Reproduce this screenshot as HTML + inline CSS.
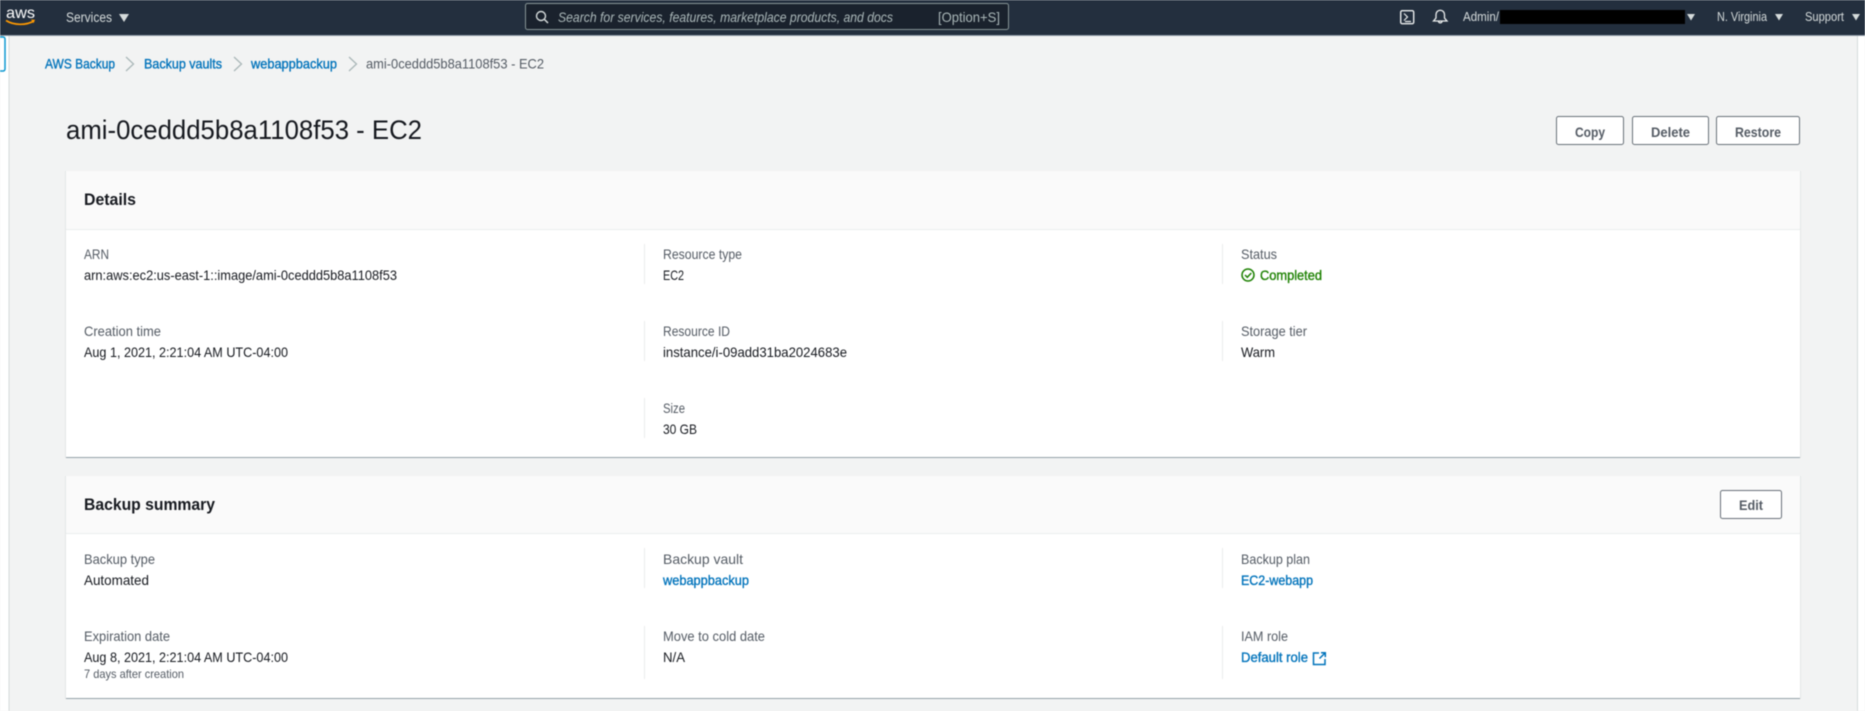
<!DOCTYPE html>
<html lang="en"><head><meta charset="utf-8"><title>ami-0ceddd5b8a1108f53 - EC2</title>
<style>
html,body{margin:0;padding:0;width:1865px;height:711px;overflow:hidden;background:#f2f3f3}
svg{display:block;filter:blur(.45px)}
text{font-family:"Liberation Sans",sans-serif;font-size:14px;fill:#16191f}
.l{fill:#545b64}
.a{fill:#0073bb;font-size:14px;stroke:#0073bb;stroke-width:.35px}
.b{font-weight:bold;fill:#545b64;font-size:14px}
.h{font-weight:bold;font-size:17px}
.n{fill:#d5dbdb;font-size:13px}
</style></head><body>
<svg width="1865" height="711" viewBox="0 0 1865 711" xmlns="http://www.w3.org/2000/svg">
<rect width="1865" height="711" fill="#f2f3f3"/>
<rect x="0" y="35" width="9" height="676" fill="#fff"/><rect x="8.5" y="35" width="1" height="676" fill="#d5dbdb"/>
<rect x="1857" y="35" width="8" height="676" fill="#fff"/><rect x="1857" y="35" width="1" height="676" fill="#d5dbdb"/>
<rect x="-3" y="37" width="8" height="34" rx="2" fill="#fff" stroke="#0a97d0" stroke-width="1.5"/>

<!-- nav -->
<rect width="1865" height="35" fill="#232f3e"/><rect y="35" width="1865" height="1" fill="#8d99a5"/>
<text x="6" y="18" class="n" style="font-size:16px;fill:#fff" textLength="29" lengthAdjust="spacingAndGlyphs">aws</text>
<path d="M6 20.500c8 5 20 5 28 .5" fill="none" stroke="#f90" stroke-width="1.7"/><path d="M31 19.500l4 .2-1.500 3.600z" fill="#f90"/>
<text x="66" y="22" class="n" style="font-size:14px" textLength="46" lengthAdjust="spacingAndGlyphs">Services</text>
<path d="M119 14h10l-5 8z" fill="#d5dbdb"/>
<rect x="525.500" y="3.500" width="483" height="26" rx="2" fill="#1a222d" stroke="#879596"/>
<circle cx="541" cy="16" r="4.500" fill="none" stroke="#d5dbdb" stroke-width="1.400"/><path d="M544.500 19.500l3.500 3.500" stroke="#d5dbdb" stroke-width="1.500"/>
<text x="558" y="22" class="n" style="font-style:italic;fill:#aab7b8;font-size:14px" textLength="335" lengthAdjust="spacingAndGlyphs">Search for services, features, marketplace products, and docs</text>
<text x="938" y="22" class="n" style="fill:#aab7b8;font-size:14px" textLength="62" lengthAdjust="spacingAndGlyphs">[Option+S]</text>
<rect x="1400.700" y="10.700" width="13" height="13" rx="1.500" fill="none" stroke="#eaeded" stroke-width="1.400"/>
<path d="M1404 13.500l3.500 3.500-3.500 3.500M1405 21.500h6" fill="none" stroke="#eaeded" stroke-width="1.200"/>
<path d="M1433.500 21h13.500l-2.500-3v-3.500a4.200 4.200 0 0 0-8.500 0V18zM1438.500 21.500a1.800 1.800 0 0 0 3.500 0M1440 10v1" fill="none" stroke="#eaeded" stroke-width="1.300"/>
<text x="1463" y="21" class="n" textLength="36" lengthAdjust="spacingAndGlyphs">Admin/</text>
<rect x="1500" y="10" width="185" height="14" fill="#000"/>
<path d="M1687 14h8l-4 6.500z" fill="#d5dbdb"/>
<text x="1717" y="21" class="n" textLength="50" lengthAdjust="spacingAndGlyphs">N. Virginia</text>
<path d="M1775 14h8l-4 6.500z" fill="#d5dbdb"/>
<text x="1805" y="21" class="n" textLength="39" lengthAdjust="spacingAndGlyphs">Support</text>
<path d="M1852 14h8l-4 6.500z" fill="#d5dbdb"/>

<!-- breadcrumb -->
<text x="45" y="68.500" class="a" textLength="70" lengthAdjust="spacingAndGlyphs">AWS Backup</text>
<path d="M126 57l7.500 7-7.500 7M234 57l7.500 7-7.500 7M349 57l7.500 7-7.500 7" fill="none" stroke="#aab7b8" stroke-width="1.300"/>
<text x="144" y="68.500" class="a" textLength="78" lengthAdjust="spacingAndGlyphs">Backup vaults</text>
<text x="251" y="68.500" class="a" textLength="86" lengthAdjust="spacingAndGlyphs">webappbackup</text>
<text x="366" y="68.500" class="l" textLength="178" lengthAdjust="spacingAndGlyphs">ami-0ceddd5b8a1108f53 - EC2</text>

<text x="66" y="139" style="font-size:27px" textLength="356" lengthAdjust="spacingAndGlyphs">ami-0ceddd5b8a1108f53 - EC2</text>

<!-- buttons -->
<rect x="1556.500" y="116.500" width="67" height="28" rx="2" fill="#fff" stroke="#687078"/>
<text x="1575" y="137" class="b" textLength="30" lengthAdjust="spacingAndGlyphs">Copy</text>
<rect x="1632.500" y="116.500" width="76" height="28" rx="2" fill="#fff" stroke="#687078"/>
<text x="1651" y="137" class="b" textLength="39" lengthAdjust="spacingAndGlyphs">Delete</text>
<rect x="1716.500" y="116.500" width="83" height="28" rx="2" fill="#fff" stroke="#687078"/>
<text x="1735" y="137" class="b" textLength="46" lengthAdjust="spacingAndGlyphs">Restore</text>

<!-- details card -->
<rect x="66" y="171" width="1734" height="286" fill="#fff"/>
<rect x="66" y="171" width="1734" height="58" fill="#fafafa"/>
<rect x="66" y="229" width="1734" height="1" fill="#eaeded"/>
<rect x="66" y="457" width="1734" height="1" fill="#95a1a8"/>
<rect x="1800" y="171" width="1" height="287" fill="#e4e7e7"/><rect x="65" y="171" width="1" height="287" fill="#e4e7e7"/>
<text x="84" y="205" class="h" textLength="52" lengthAdjust="spacingAndGlyphs">Details</text>
<path d="M644.500 244v40M644.500 321v40M644.500 398v40M1222.500 244v40M1222.500 321v40" stroke="#eaeded"/>

<text x="84" y="259" class="l" textLength="25" lengthAdjust="spacingAndGlyphs">ARN</text>
<text x="84" y="280" textLength="313" lengthAdjust="spacingAndGlyphs">arn:aws:ec2:us-east-1::image/ami-0ceddd5b8a1108f53</text>
<text x="84" y="336" class="l" textLength="77" lengthAdjust="spacingAndGlyphs">Creation time</text>
<text x="84" y="357" textLength="204" lengthAdjust="spacingAndGlyphs">Aug 1, 2021, 2:21:04 AM UTC-04:00</text>

<text x="663" y="259" class="l" textLength="79" lengthAdjust="spacingAndGlyphs">Resource type</text>
<text x="663" y="280" textLength="21" lengthAdjust="spacingAndGlyphs">EC2</text>
<text x="663" y="336" class="l" textLength="67" lengthAdjust="spacingAndGlyphs">Resource ID</text>
<text x="663" y="357" textLength="184" lengthAdjust="spacingAndGlyphs">instance/i-09add31ba2024683e</text>
<text x="663" y="413" class="l" textLength="22" lengthAdjust="spacingAndGlyphs">Size</text>
<text x="663" y="434" textLength="34" lengthAdjust="spacingAndGlyphs">30 GB</text>

<text x="1241" y="259" class="l" textLength="36" lengthAdjust="spacingAndGlyphs">Status</text>
<circle cx="1248" cy="275" r="6" fill="none" stroke="#1d8102" stroke-width="1.500"/>
<path d="M1245 275l2.300 2.300 4-4.300" fill="none" stroke="#1d8102" stroke-width="1.500"/>
<text x="1260" y="280" style="fill:#1d8102;stroke:#1d8102;stroke-width:.35px" textLength="62" lengthAdjust="spacingAndGlyphs">Completed</text>
<text x="1241" y="336" class="l" textLength="66" lengthAdjust="spacingAndGlyphs">Storage tier</text>
<text x="1241" y="357" textLength="34" lengthAdjust="spacingAndGlyphs">Warm</text>

<!-- summary card -->
<rect x="66" y="476" width="1734" height="222" fill="#fff"/>
<rect x="66" y="476" width="1734" height="57" fill="#fafafa"/>
<rect x="66" y="533" width="1734" height="1" fill="#eaeded"/>
<rect x="66" y="698" width="1734" height="1" fill="#95a1a8"/>
<rect x="1800" y="476" width="1" height="223" fill="#e4e7e7"/><rect x="65" y="476" width="1" height="223" fill="#e4e7e7"/>
<text x="84" y="510" class="h" textLength="131" lengthAdjust="spacingAndGlyphs">Backup summary</text>
<rect x="1720.500" y="490.500" width="61" height="28" rx="2" fill="#fff" stroke="#687078"/>
<text x="1739" y="510" class="b" textLength="24" lengthAdjust="spacingAndGlyphs">Edit</text>
<path d="M644.500 548v40M644.500 626v53M1222.500 548v40M1222.500 626v53" stroke="#eaeded"/>

<text x="84" y="564" class="l" textLength="71" lengthAdjust="spacingAndGlyphs">Backup type</text>
<text x="84" y="585" textLength="65" lengthAdjust="spacingAndGlyphs">Automated</text>
<text x="84" y="641" class="l" textLength="86" lengthAdjust="spacingAndGlyphs">Expiration date</text>
<text x="84" y="662" textLength="204" lengthAdjust="spacingAndGlyphs">Aug 8, 2021, 2:21:04 AM UTC-04:00</text>
<text x="84" y="678" class="l" style="font-size:12px" textLength="100" lengthAdjust="spacingAndGlyphs">7 days after creation</text>

<text x="663" y="564" class="l" textLength="80" lengthAdjust="spacingAndGlyphs">Backup vault</text>
<text x="663" y="585" class="a" textLength="86" lengthAdjust="spacingAndGlyphs">webappbackup</text>
<text x="663" y="641" class="l" textLength="102" lengthAdjust="spacingAndGlyphs">Move to cold date</text>
<text x="663" y="662" textLength="22" lengthAdjust="spacingAndGlyphs">N/A</text>

<text x="1241" y="564" class="l" textLength="69" lengthAdjust="spacingAndGlyphs">Backup plan</text>
<text x="1241" y="585" class="a" textLength="72" lengthAdjust="spacingAndGlyphs">EC2-webapp</text>
<text x="1241" y="641" class="l" textLength="47" lengthAdjust="spacingAndGlyphs">IAM role</text>
<text x="1241" y="662" class="a" textLength="67" lengthAdjust="spacingAndGlyphs">Default role</text>
<path d="M1319 653h-5.500v11.500h11.500V659M1319.500 658.500l5.500-5.500M1321 652.800h4.300v4.300" fill="none" stroke="#0073bb" stroke-width="1.500"/>
</svg>
</body></html>
